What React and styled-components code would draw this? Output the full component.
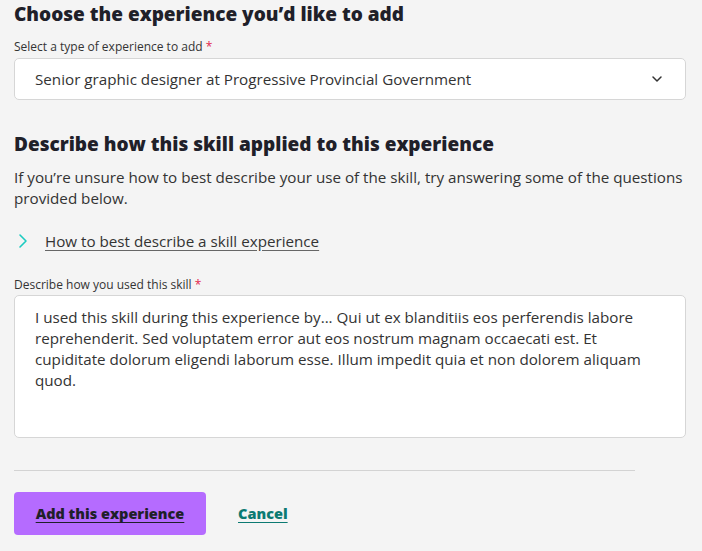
import React from 'react';
import styled, { createGlobalStyle } from 'styled-components';

const GlobalStyle = createGlobalStyle`
  body {
    margin: 0;
    background: #f4f4f4;
    font-family: "Open Sans", "Liberation Sans", sans-serif;
    color: #333;
  }
  * { box-sizing: border-box; }
`;

const Page = styled.div`
  padding: 0 16px 0 14px;
`;

const Heading = styled.h2`
  margin: ${(p) => p.$top || 0}px 0 0;
  font-size: 19px;
  line-height: 28px;
  font-weight: 800;
  color: #1f2029;
`;

const Label = styled.label`
  display: block;
  margin-top: ${(p) => p.$top || 0}px;
  font-size: 12px;
  line-height: 16px;
  color: #333;
`;

const Required = styled.span`
  color: #e3254c;
`;

const SelectBox = styled.div`
  margin-top: 3px;
  height: 42px;
  background: #fff;
  border: 1px solid #d6d6d6;
  border-radius: 5px;
  display: flex;
  align-items: center;
  justify-content: space-between;
  padding: 0 22px 0 20px;
  font-size: 15.2px;
  color: #333;
`;

const Text = styled.p`
  margin: 9px 0 0;
  font-size: 15.2px;
  line-height: 21px;
  color: #333;
`;

const Toggle = styled.button`
  margin-top: 22px;
  display: flex;
  align-items: center;
  gap: 17px;
  padding: 0 0 0 4px;
  background: none;
  border: 0;
  font: inherit;
  font-size: 15.2px;
  color: #333;
  cursor: pointer;
`;

const ToggleText = styled.span`
  text-decoration: underline;
  text-underline-offset: 3px;
  text-decoration-color: #666;
`;

const TextArea = styled.div`
  margin-top: 2px;
  height: 143px;
  background: #fff;
  border: 1px solid #d6d6d6;
  border-radius: 5px;
  padding: 11px 20px;
  font-size: 15.2px;
  line-height: 21px;
  color: #333;
`;

const Divider = styled.hr`
  margin: 32px 51px 0 0;
  border: 0;
  border-top: 1px solid #d3d3d3;
`;

const Actions = styled.div`
  margin-top: 21px;
  display: flex;
  align-items: center;
  gap: 32px;
`;

const PrimaryButton = styled.button`
  width: 192px;
  height: 43px;
  background: #b56bff;
  border: 0;
  border-radius: 4px;
  font-family: inherit;
  font-size: 14.5px;
  font-weight: 800;
  color: #1f2029;
  text-decoration: underline;
  text-underline-offset: 3px;
  cursor: pointer;
`;

const LinkButton = styled.a`
  font-size: 14.5px;
  font-weight: 800;
  color: #0c7a72;
  text-decoration: underline;
  text-underline-offset: 3px;
  cursor: pointer;
`;

const Chevron = ({ dir }) =>
  dir === 'down' ? (
    <svg width="12" height="12" viewBox="0 0 12 12" fill="none">
      <path d="M2 4l4 4 4-4" stroke="#333" strokeWidth="1.5" strokeLinecap="round" strokeLinejoin="round" />
    </svg>
  ) : (
    <svg width="10" height="16" viewBox="0 0 10 16" fill="none">
      <path d="M2 2l6 6-6 6" stroke="#1ccbc0" strokeWidth="1.6" strokeLinecap="round" strokeLinejoin="round" />
    </svg>
  );

const App = () => {
  return (
    <Page>
      <GlobalStyle />
      <Heading>Choose the experience you’d like to add</Heading>
      <Label $top={11}>
        Select a type of experience to add <Required>*</Required>
      </Label>
      <SelectBox>
        <span>Senior graphic designer at Progressive Provincial Government</span>
        <Chevron dir="down" />
      </SelectBox>
      <Heading $top={30}>Describe how this skill applied to this experience</Heading>
      <Text>
        If you’re unsure how to best describe your use of the skill, try answering some of the questions
        provided below.
      </Text>
      <Toggle>
        <Chevron dir="right" />
        <ToggleText>How to best describe a skill experience</ToggleText>
      </Toggle>
      <Label $top={26}>
        Describe how you used this skill <Required>*</Required>
      </Label>
      <TextArea>
        I used this skill during this experience by... Qui ut ex blanditiis eos perferendis labore
        reprehenderit. Sed voluptatem error aut eos nostrum magnam occaecati est. Et cupiditate dolorum
        eligendi laborum esse. Illum impedit quia et non dolorem aliquam quod.
      </TextArea>
      <Divider />
      <Actions>
        <PrimaryButton>Add this experience</PrimaryButton>
        <LinkButton>Cancel</LinkButton>
      </Actions>
    </Page>
  );
};

export default App;
